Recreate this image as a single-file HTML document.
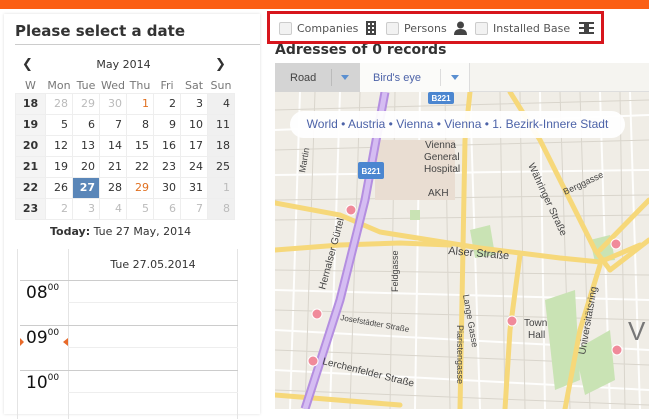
<!DOCTYPE html>
<html><head><meta charset="utf-8"><style>
*{margin:0;padding:0;box-sizing:border-box}
body{width:649px;height:409px;overflow:hidden;background:#fff;font-family:Verdana,"DejaVu Sans",sans-serif;position:relative;color:#333}
.top{position:absolute;left:0;top:0;width:649px;height:9px;background:#fb5f14}
.panel{position:absolute;left:4px;top:14px;width:256px;height:400px;background:#fff;box-shadow:0 0 3px #ddd}
h1{position:absolute;left:15px;top:22px;font-size:15px;font-weight:bold;color:#333;font-family:"DejaVu Sans",sans-serif}
.hr{position:absolute;left:15px;top:44px;width:245px;height:1px;background:#ccc}
.mon{position:absolute;left:15px;top:58px;width:217px;text-align:center;font-size:11px}
.arr{position:absolute;top:57px;font-size:13px;font-weight:bold}
table{position:absolute;left:15px;top:78px;border-collapse:collapse;font-size:11px}
td{width:27px;height:21px;text-align:right;padding-right:4px;border:1px solid #eee}
tr.h td{border:none;color:#777;text-align:center;padding:0;height:15px}
td.w{width:30px;font-weight:bold;background:#f4f4f4;text-align:center;padding:0}
td.s{background:#f0f0f0}
.g{color:#bbb}.o{color:#e07020}
td.t{background:#5a86b8;color:#fff;font-weight:bold}
.today{position:absolute;left:50px;top:225px;font-size:11px}
.day{position:absolute;left:17px;top:249px;width:221px;height:170px;border-left:1px solid #e4e4e4;border-right:1px solid #e4e4e4}
.dh{position:absolute;left:68px;top:258px;width:170px;text-align:center;font-size:11px}
.vl{position:absolute;left:68px;top:249px;width:1px;height:170px;background:#e4e4e4}
.hl{position:absolute;left:20px;width:218px;height:1px;background:#ccc}
.hl2{position:absolute;left:68px;width:170px;height:1px;background:#eee}
.hr2{position:absolute;left:26px;font-size:17px;font-family:"DejaVu Sans",sans-serif;color:#111}
.hr2 sup{font-size:9px;vertical-align:8px}
.filter{position:absolute;left:267px;top:11px;width:337px;height:33px;border:3px solid #d7161d;font-size:11px;color:#555}
.cb{position:absolute;top:8px;width:13px;height:13px;border:1px solid #ccc;border-radius:2px;background:#f2f2f2}
.lbl{position:absolute;top:8px}
h2{position:absolute;left:275px;top:42px;font-size:14px;font-weight:bold;color:#333;font-family:"DejaVu Sans",sans-serif}
.map{position:absolute;left:275px;top:63px;width:374px;height:346px;background:#f0ede6;overflow:hidden}
.tb{position:absolute;left:0;top:0;width:374px;height:29px;background:#f5f4f0;border-bottom:1px solid #ddd;font-family:"Liberation Sans",Arial,sans-serif;font-size:11px}
.bc{position:absolute;left:15px;top:48px;width:335px;height:27px;border-radius:14px;background:rgba(255,255,255,.93);color:#4d63a8;font-family:"Liberation Sans",Arial,sans-serif;font-size:12px;line-height:27px;text-align:center}
</style></head><body>
<div class="top"></div>
<div class="panel"></div>
<h1>Please select a date</h1>
<div class="hr"></div>
<div class="arr" style="left:22px">&#10094;</div><div class="arr" style="left:215px">&#10095;</div>
<div class="mon">May 2014</div>
<table>
<tr class="h"><td style="width:30px">W</td><td>Mon</td><td>Tue</td><td>Wed</td><td>Thu</td><td>Fri</td><td>Sat</td><td>Sun</td></tr>
<tr><td class="w">18</td><td class="g">28</td><td class="g">29</td><td class="g">30</td><td class="o">1</td><td>2</td><td>3</td><td class="s">4</td></tr>
<tr><td class="w">19</td><td>5</td><td>6</td><td>7</td><td>8</td><td>9</td><td>10</td><td class="s">11</td></tr>
<tr><td class="w">20</td><td>12</td><td>13</td><td>14</td><td>15</td><td>16</td><td>17</td><td class="s">18</td></tr>
<tr><td class="w">21</td><td>19</td><td>20</td><td>21</td><td>22</td><td>23</td><td>24</td><td class="s">25</td></tr>
<tr><td class="w">22</td><td>26</td><td class="t">27</td><td>28</td><td class="o">29</td><td>30</td><td>31</td><td class="s g">1</td></tr>
<tr><td class="w">23</td><td class="g">2</td><td class="g">3</td><td class="g">4</td><td class="g">5</td><td class="g">6</td><td class="g">7</td><td class="s g">8</td></tr>
</table>
<div class="today"><b>Today:</b> Tue 27 May, 2014</div>
<div class="day"></div><div class="vl"></div>
<div class="dh">Tue 27.05.2014</div>
<div class="hl" style="top:280px"></div><div class="hl2" style="top:302px"></div>
<div class="hl" style="top:325px"></div><div class="hl2" style="top:347px"></div>
<div class="hl" style="top:370px"></div><div class="hl2" style="top:392px"></div>
<div class="hr2" style="top:283px">08<sup>00</sup></div>
<div class="hr2" style="top:328px">09<sup>00</sup></div>
<div class="hr2" style="top:373px">10<sup>00</sup></div>
<div style="position:absolute;left:20px;top:338px;border-left:4px solid #e86a2a;border-top:4px solid transparent;border-bottom:4px solid transparent"></div>
<div style="position:absolute;left:63px;top:338px;border-right:5px solid #e86a2a;border-top:4px solid transparent;border-bottom:4px solid transparent"></div>

<div class="map">
<svg width="374" height="346" viewBox="275 63 374 346" style="position:absolute;left:0;top:0">
<g stroke="#fff" stroke-width="2" fill="none" opacity=".9">
<path d="M275 130 L649 115M275 175 L649 170M275 290 L649 300M275 330 L649 350M275 370 L649 390M300 92 L290 409M340 92 L330 409M420 92 L415 409M470 92 L480 409M540 92 L545 409M600 92 L610 409M630 92 L640 409"/>
</g>
<g stroke="#d9d5cc" stroke-width="1" fill="none">
<path d="M275 110 L649 100M275 150 L649 140M275 200 L649 195M275 220 L649 215M275 270 L649 275M275 310 L649 320M275 350 L649 365M275 390 L649 405M315 92 L305 409M360 92 L350 409M395 92 L390 409M445 92 L450 409M500 92 L505 409M520 92 L525 409M560 92 L570 409M580 92 L590 409M620 92 L625 409"/>
</g>
<path d="M375 140 L455 140 L455 200 L375 200Z" fill="#e9ddd2"/>
<g fill="#c9e3b4"><path d="M470 230 L490 225 L495 255 L475 258Z"/><path d="M590 240 L610 235 L615 260 L595 262Z"/><path d="M545 300 L575 290 L580 380 L555 390Z"/><path d="M575 350 L610 330 L615 380 L585 395Z"/><path d="M410 210 L420 210 L420 220 L410 220Z"/></g>
<g stroke="#f6d87a" stroke-width="5" fill="none" stroke-linecap="round">
<path d="M275 203 L340 215 L380 232 L430 240 L480 248 L520 253 L560 258 L600 262 L640 245"/>
<path d="M275 250 L340 245 L400 243 L450 245"/>
<path d="M510 92 L540 140 L570 200 L595 250 L610 270"/>
<path d="M520 255 L510 330 L505 409"/>
<path d="M600 265 L580 330 L565 409"/>
<path d="M600 250 L649 200"/>
<path d="M610 270 L649 240"/>
<path d="M470 92 L465 140 L460 409"/>
<path d="M275 395 L400 405"/>
</g>
<path d="M385 92 L365 200 L340 300 L305 409" stroke="#b48ee0" stroke-width="9" fill="none"/>
<path d="M385 92 L365 200 L340 300 L305 409" stroke="#d5bdf2" stroke-width="5" fill="none"/>
<rect x="358" y="162" width="26" height="17" rx="2" fill="#4b86d0"/><text x="371" y="174" font-size="8" fill="#fff" text-anchor="middle" font-family="Liberation Sans" font-weight="bold">B221</text>
<rect x="428" y="92" width="26" height="12" rx="2" fill="#4b86d0"/><text x="441" y="101" font-size="8" fill="#fff" text-anchor="middle" font-family="Liberation Sans" font-weight="bold">B221</text>
<g fill="#f08a9a" stroke="#fff" stroke-width="1"><circle cx="351" cy="210" r="5"/><circle cx="317" cy="314" r="5"/><circle cx="313" cy="361" r="5"/><circle cx="512" cy="321" r="5"/><circle cx="616" cy="244" r="5"/><circle cx="617" cy="350" r="5"/></g>
<g font-family="Liberation Sans" font-size="10" fill="#444">
<text x="425" y="148">Vienna</text><text x="424" y="160">General</text><text x="424" y="172">Hospital</text><text x="428" y="196">AKH</text>
<text x="448" y="254" transform="rotate(5 448 254)" font-size="11">Alser Straße</text>
<text x="524" y="326">Town</text><text x="528" y="338">Hall</text>
<text x="325" y="290" transform="rotate(-75 325 290)">Hernalser Gürtel</text>
<text x="322" y="364" transform="rotate(14 322 364)">Lerchenfelder Straße</text>
<text x="340" y="320" transform="rotate(10 340 320)" font-size="8">Josefstädter Straße</text>
<text x="398" y="292" transform="rotate(-90 398 292)" font-size="9">Feldgasse</text>
<text x="463" y="295" transform="rotate(80 463 295)" font-size="9">Lange Gasse</text>
<text x="457" y="325" transform="rotate(90 457 325)" font-size="9">Piaristengasse</text>
<text x="528" y="165" transform="rotate(65 528 165)">Währinger Straße</text>
<text x="565" y="195" transform="rotate(-25 565 195)" font-size="9">Berggasse</text>
<text x="585" y="355" transform="rotate(-80 585 355)">Universitätsring</text>
<text x="628" y="340" font-size="26" fill="#777">V</text>
<text x="305" y="173" transform="rotate(-80 305 173)" font-size="9">Martin</text>
</g>
</svg>
<div class="tb">
<div style="position:absolute;left:0;top:0;width:85px;height:29px;background:#d4d4d4"></div>
<div style="position:absolute;left:15px;top:9px;color:#444">Road</div>
<div style="position:absolute;left:56px;top:6px;width:1px;height:17px;background:#bbb"></div>
<div style="position:absolute;left:66px;top:12px;border-top:5px solid #5a8fd0;border-left:4px solid transparent;border-right:4px solid transparent"></div>
<div style="position:absolute;left:85px;top:0;width:110px;height:29px;background:#fbfbf9;border-right:1px solid #ddd"></div>
<div style="position:absolute;left:98px;top:9px;color:#4d63a8">Bird's eye</div>
<div style="position:absolute;left:165px;top:6px;width:1px;height:17px;background:#ddd"></div>
<div style="position:absolute;left:176px;top:12px;border-top:5px solid #5a8fd0;border-left:4px solid transparent;border-right:4px solid transparent"></div>
</div>
<div class="bc">World • Austria • Vienna • Vienna • 1. Bezirk-Innere Stadt</div>
</div>

<h2>Adresses of 0 records</h2>
<div class="filter">
<div class="cb" style="left:9px"></div><div class="lbl" style="left:27px">Companies</div>
<svg style="position:absolute;left:95px;top:7px" width="12" height="14"><rect x="1" y="0" width="10" height="14" fill="#444"/><g fill="#fff"><rect x="3" y="2" width="2" height="2"/><rect x="7" y="2" width="2" height="2"/><rect x="3" y="6" width="2" height="2"/><rect x="7" y="6" width="2" height="2"/><rect x="3" y="10" width="2" height="2"/><rect x="7" y="10" width="2" height="2"/></g></svg>
<div class="cb" style="left:116px"></div><div class="lbl" style="left:134px">Persons</div>
<svg style="position:absolute;left:184px;top:7px" width="13" height="14"><circle cx="6.5" cy="4" r="3.5" fill="#444"/><path d="M0 14 Q0 8 6.5 8 Q13 8 13 14Z" fill="#444"/></svg>
<div class="cb" style="left:205px"></div><div class="lbl" style="left:223px">Installed Base</div>
<svg style="position:absolute;left:309px;top:8px" width="15" height="12"><g fill="#444"><rect y="0" width="15" height="2"/><rect y="5" width="15" height="2"/><rect y="10" width="15" height="2"/><rect x="5" y="2" width="5" height="8"/></g></svg>
</div>
</body></html>
